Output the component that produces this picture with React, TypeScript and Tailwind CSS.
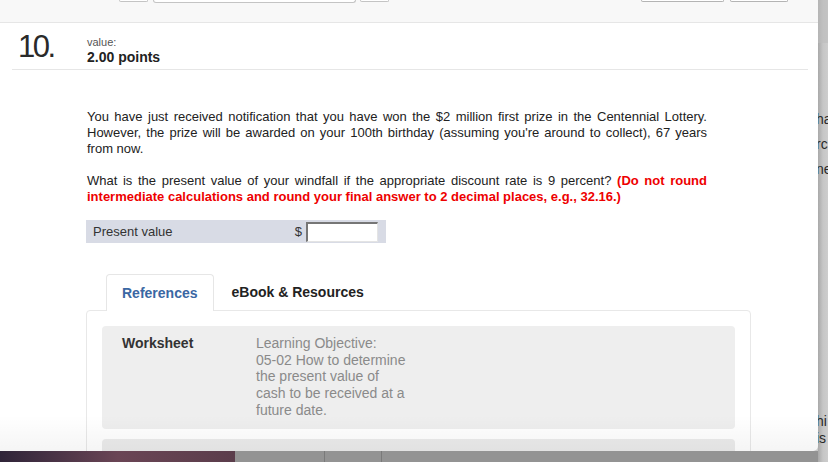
const objective = ["Learning Objective:", "05-02 How to determine", "the present value of", "cash to be received at a", "future date."];

function Toolbar() {
    return (
        <div className="flex h-[23px] shrink-0 items-start border-b border-[#e6e6e6] bg-[#f8f8f8] pl-[119px] pr-[30px]">
            <div className="h-[2px] w-[29px] rounded-b-[3px] border-x border-b border-[#c4c4c4] bg-white" />
            <div className="ml-[5px] h-[3px] w-[203px] rounded-b-[3px] border-x border-b border-[#c4c4c4] bg-white" />
            <div className="ml-[4px] h-[2px] w-[29px] rounded-b-[3px] border-x border-b border-[#c4c4c4] bg-white" />
            <div className="ml-auto h-[2px] w-[83px] rounded-b-[3px] border-x border-b border-[#b4b4b4] bg-white" />
            <div className="ml-[6px] h-[2px] w-[58px] rounded-b-[3px] border-x border-b border-[#b4b4b4] bg-white" />
        </div>
    );
}

function Question() {
    return (
        <div className="flex flex-col">
            {/* number + value */}
            <div className="flex items-start pl-[18px] pt-[8px]">
                <div className="w-[69px] text-[31px] leading-none tracking-[-2.5px] text-[#2a2a2a]">10.</div>
                <div className="mt-[5px] flex flex-col">
                    <span className="text-[11px] leading-[13px] text-[#555]">value:</span>
                    <span className="text-[14px] font-bold leading-[17px] text-[#222]">2.00 points</span>
                </div>
            </div>
            <div className="ml-[12px] mr-[10px] mt-[3px] border-t border-[#e6e6e6]" />

            {/* prompt */}
            <div className="ml-[87px] mt-[39px] w-[620px] text-justify text-[13px] leading-[16px] text-[#222]">
                <p>
                    You have just received notification that you have won the $2 million first prize in the Centennial
                    Lottery. However, the prize will be awarded on your 100th birthday (assuming you're around to
                    collect), 67 years from now.
                </p>
                <p className="mt-[16px]">
                    What is the present value of your windfall if the appropriate discount rate is 9 percent?{" "}
                    <span className="font-bold text-[#ee0000]">
                        (Do not round intermediate calculations and round your final answer to 2 decimal places, e.g.,
                        32.16.)
                    </span>
                </p>
            </div>

            {/* answer row */}
            <div className="ml-[86px] mt-[15px] flex h-[23px] w-[300px] items-center bg-[#d8dbe5] pl-[7px] pr-[8px] text-[13px] text-[#333]">
                <span>Present value</span>
                <span className="ml-auto mr-[4px]">$</span>
                <div className="h-[20px] w-[72px] border-l-2 border-t-2 border-b border-r border-l-[#767676] border-t-[#767676] border-b-[#e4e4e4] border-r-[#e4e4e4] bg-white" />
            </div>

            {/* tabs */}
            <div className="ml-[86px] mt-[31px] flex w-[665px] flex-col">
                <div className="relative z-10 -mb-px flex pl-[20px] text-[14px] font-bold">
                    <div className="flex h-[37px] items-center rounded-t-[4px] border-x border-t border-[#e6e6e6] bg-white px-[15px] text-[#3a67a3]">
                        References
                    </div>
                    <div className="ml-[3px] flex h-[37px] items-center px-[15px] text-[#222]">eBook &amp; Resources</div>
                </div>
                <div className="flex flex-col gap-[10px] rounded-[4px] border border-[#e8e8e8] px-[15px] pt-[15px] pb-[15px]">
                    <div className="flex rounded-[4px] bg-[#eeeeee] pl-[20px] pt-[9px] pb-[10px] text-[14px] leading-[16.7px]">
                        <div className="w-[134px] font-bold text-[#333]">Worksheet</div>
                        <div className="flex w-[155px] flex-col text-[#8a8a8a]">
                            {objective.map((line) => (
                                <span key={line}>{line}</span>
                            ))}
                        </div>
                    </div>
                    <div className="flex h-[60px] rounded-[4px] bg-[#ebebeb] pl-[20px] pt-[11px] text-[14px] leading-[16.7px]">
                        <div className="w-[134px] font-bold text-[#8a8a8a]">Difficulty: Basic</div>
                        <div className="text-[#8a8a8a]">Section: 5.1 Future Value</div>
                    </div>
                </div>
            </div>
        </div>
    );
}

export default function App() {
    return (
        <div className="grid h-[462px] w-[828px] grid-cols-[818px_10px] grid-rows-[451px_11px] overflow-hidden bg-[#c9c9c9] font-['Liberation_Sans',Arial,sans-serif]">
            {/* window */}
            <div className="relative flex flex-col overflow-hidden rounded-br-[5px] bg-white">
                <Toolbar />
                <Question />
                <div className="pointer-events-none absolute inset-x-0 bottom-0 h-[36px] bg-linear-to-b from-transparent to-black/[0.04]" />
            </div>

            {/* desktop strip at the right */}
            <div className="row-span-2 flex flex-col overflow-hidden bg-linear-to-r from-[#a9a9a9] via-[#c6c6c6] to-[#cdcdcd] text-[14px] text-[#2a2a2a]">
                <div className="h-[43px] shrink-0 bg-[#bdbdbd]/60" />
                <div className="-ml-[2px] mt-[64px] flex flex-col leading-[25px]">
                    <span>ha</span>
                    <span>rc</span>
                    <span>ne</span>
                </div>
                <div className="-ml-[2px] mt-[231px] flex flex-col leading-[17px]">
                    <span>hi</span>
                    <span>is</span>
                </div>
            </div>

            {/* desktop strip at the bottom */}
            <div className="flex">
                <div className="w-[235px] bg-linear-to-r from-[#2f2438] via-[#6a4555] to-[#5b3d4b]" />
                <div className="flex flex-1 bg-[#939393]">
                    <div className="w-[90px] border-r border-[#7a7a7a]" />
                    <div className="w-[57px] border-r border-[#7a7a7a]" />
                </div>
            </div>
        </div>
    );
}
